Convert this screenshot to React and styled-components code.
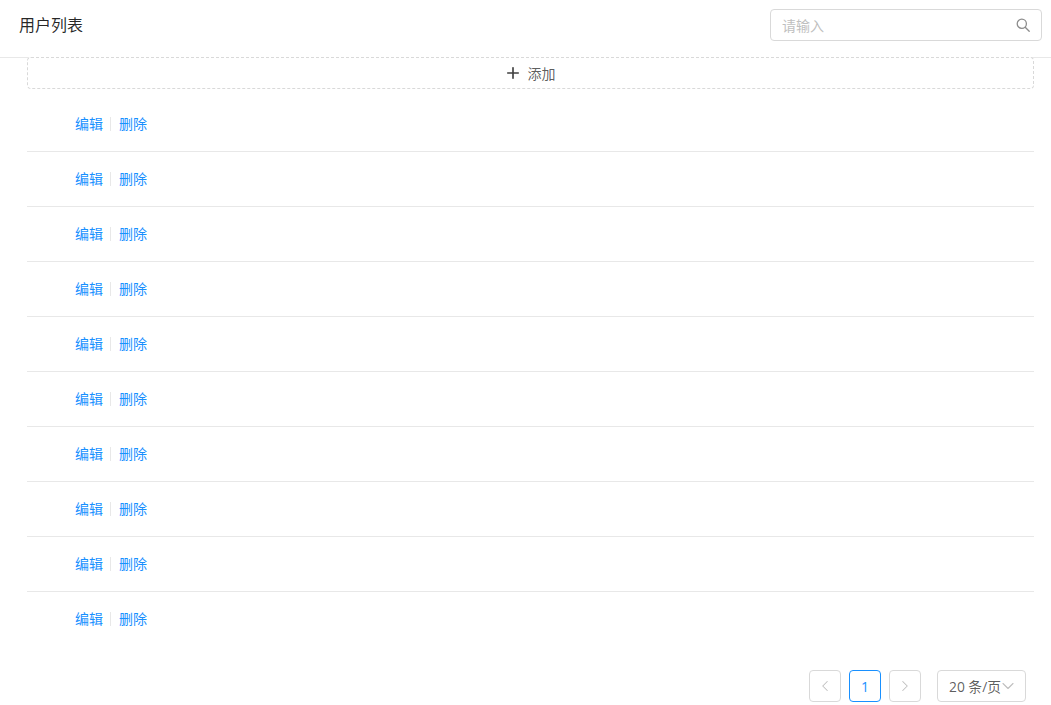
import React from 'react';
import styled, { createGlobalStyle } from 'styled-components';
import { Plus, ChevronLeft, ChevronRight, ChevronDown } from 'lucide-react';

const rows = [1, 2, 3, 4, 5, 6, 7, 8, 9, 10];

export default function App() {
  return (
    <>
      <GlobalStyle />
      <Header>
        <Title>用户列表</Title>
        <SearchBox>
          <SearchInput placeholder="请输入" />
          <svg width="14" height="14" viewBox="0 0 14 14" fill="none" stroke="#8c8c8c" strokeWidth="1.3">
            <circle cx="5.8" cy="5.8" r="4.6" />
            <path d="M9.2 9.2L13.2 13.2" strokeLinecap="round" />
          </svg>
        </SearchBox>
      </Header>
      <Content>
        <AddButton>
          <Plus size={18} color="#404040" strokeWidth={2.2} />
          <span>添加</span>
        </AddButton>
        <List>
          {rows.map((id) => (
            <Row key={id}>
              <ActionLink>编辑</ActionLink>
              <Divider />
              <ActionLink>删除</ActionLink>
            </Row>
          ))}
        </List>
      </Content>
      <Pagination>
        <PageButton disabled>
          <ChevronLeft size={18} strokeWidth={1.4} />
        </PageButton>
        <PageButton $active>1</PageButton>
        <PageButton disabled>
          <ChevronRight size={18} strokeWidth={1.4} />
        </PageButton>
        <SizeSelect>
          <span>20 条/页</span>
          <SelectArrow size={20} color="#bfbfbf" strokeWidth={1.3} />
        </SizeSelect>
      </Pagination>
    </>
  );
}

const GlobalStyle = createGlobalStyle`
  html, body {
    margin: 0;
    padding: 0;
    background: #fff;
  }
  body {
    font-family: "Open Sans", "Noto Sans CJK SC", sans-serif;
    font-size: 14px;
    color: rgba(0, 0, 0, 0.65);
  }
  * {
    box-sizing: border-box;
  }
`;

const Header = styled.header`
  height: 58px;
  padding: 9px 9px 0 19px;
  border-bottom: 1px solid #e8e8e8;
  display: flex;
  align-items: flex-start;
  justify-content: space-between;
`;

const Title = styled.h1`
  margin: 0;
  font-size: 16px;
  font-weight: 400;
  line-height: 32px;
  color: rgba(0, 0, 0, 0.85);
`;

const SearchBox = styled.div`
  width: 272px;
  height: 32px;
  padding: 0 11px;
  border: 1px solid #d9d9d9;
  border-radius: 4px;
  display: flex;
  align-items: center;
  justify-content: space-between;
`;

const SearchInput = styled.input`
  flex: 1;
  min-width: 0;
  border: 0;
  outline: 0;
  padding: 0;
  font: inherit;
  &::placeholder {
    color: #bfbfbf;
    opacity: 1;
  }
`;

const Content = styled.main`
  margin-top: -1px;
  padding: 0 17px 0 27px;
`;

const AddButton = styled.button`
  width: 100%;
  height: 32px;
  padding: 0 2px 0 0;
  border: 1px dashed #d9d9d9;
  border-radius: 4px;
  background: #fff;
  font: inherit;
  color: rgba(0, 0, 0, 0.65);
  display: flex;
  align-items: center;
  justify-content: center;
  gap: 6px;
`;

const List = styled.ul`
  list-style: none;
  margin: 8px 0 0;
  padding: 0;
`;

const Row = styled.li`
  height: 55px;
  padding-left: 48px;
  border-bottom: 1px solid #e8e8e8;
  display: flex;
  align-items: center;
  &:last-child {
    border-bottom-color: transparent;
  }
`;

const ActionLink = styled.a`
  color: #1890ff;
  line-height: 22px;
`;

const Divider = styled.i`
  width: 1px;
  height: 14px;
  margin: 0 8px 0 7px;
  background: #e8e8e8;
`;

const Pagination = styled.nav`
  margin-top: 23px;
  padding-right: 25px;
  display: flex;
  justify-content: flex-end;
  align-items: center;
  gap: 8px;
`;

const PageButton = styled.button`
  width: 32px;
  height: 32px;
  padding: 0;
  border: 1px solid ${(p) => (p.$active ? '#1890ff' : '#d9d9d9')};
  border-radius: 4px;
  background: #fff;
  font: inherit;
  color: ${(p) => (p.$active ? '#1890ff' : 'rgba(0, 0, 0, 0.25)')};
  display: flex;
  align-items: center;
  justify-content: center;
`;

const SizeSelect = styled.div`
  width: 89px;
  height: 32px;
  margin-left: 8px;
  padding: 0 7px 0 11px;
  border: 1px solid #d9d9d9;
  border-radius: 4px;
  display: flex;
  align-items: center;
  justify-content: space-between;
  white-space: nowrap;
  font-size: 13.8px;
`;

const SelectArrow = styled(ChevronDown)`
  flex-shrink: 0;
  margin-left: -5px;
`;
